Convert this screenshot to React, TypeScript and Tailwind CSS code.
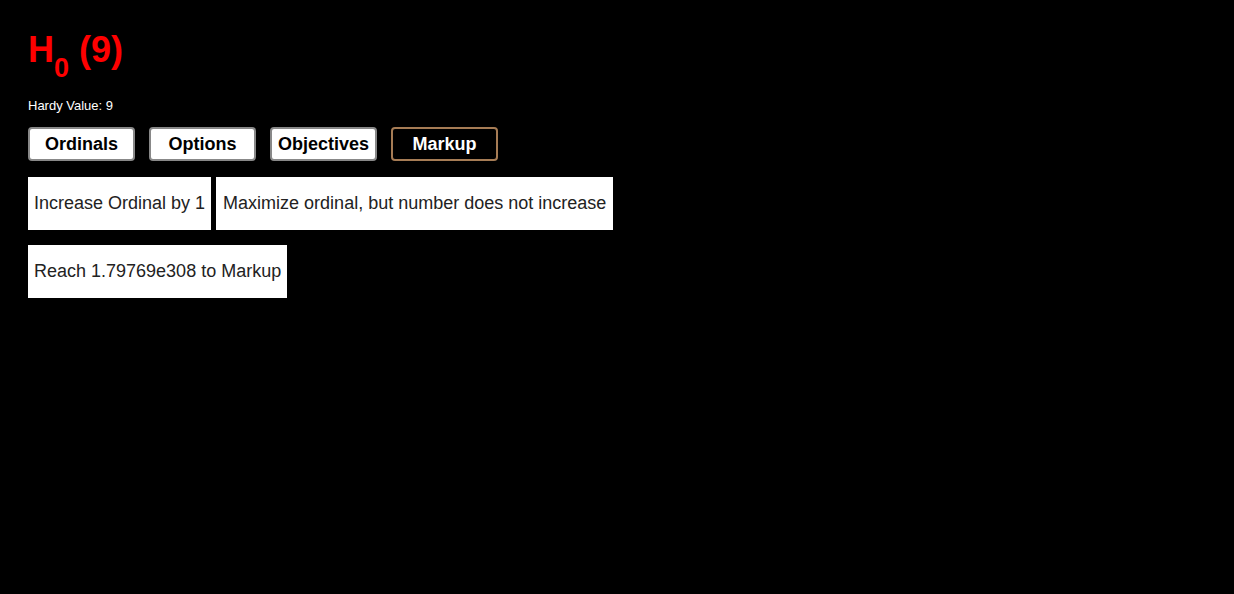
const TABS = ["Ordinals", "Options", "Objectives", "Markup"];

export default function App() {
  const active = "Markup";

  return (
    <div className="min-h-screen bg-black px-7 pt-[30px] font-['Liberation_Sans',Arial,sans-serif]">
      <h1 className="text-[36px] leading-[40px] font-bold text-[#ff0000]">
        H<sub className="text-[27px] align-[-8px]">0</sub> (9)
      </h1>

      <p className="mt-[28px] text-[13px] leading-[16px] text-white">Hardy Value: 9</p>

      <div className="mt-[13px] flex gap-[14px]">
        {TABS.map((tab) => (
          <button
            key={tab}
            className={`h-[34px] w-[107px] rounded-[4px] text-[18px] font-bold ${
              tab === active
                ? "border-2 border-[#a67c55] bg-black text-white"
                : "border-2 border-[#888] bg-white text-black"
            }`}
          >
            {tab}
          </button>
        ))}
      </div>

      <div className="mt-[16px] flex flex-col gap-[15px]">
        <div className="flex gap-[5px]">
          <div className="flex h-[53px] items-center bg-white px-[6px] text-[18px] text-[#222]">
            Increase Ordinal by 1
          </div>
          <div className="flex h-[53px] items-center bg-white px-[7px] text-[18px] text-[#222]">
            Maximize ordinal, but number does not increase
          </div>
        </div>
        <div className="flex">
          <div className="flex h-[53px] items-center bg-white px-[6px] text-[18px] text-[#222]">
            Reach 1.79769e308 to Markup
          </div>
        </div>
      </div>
    </div>
  );
}
